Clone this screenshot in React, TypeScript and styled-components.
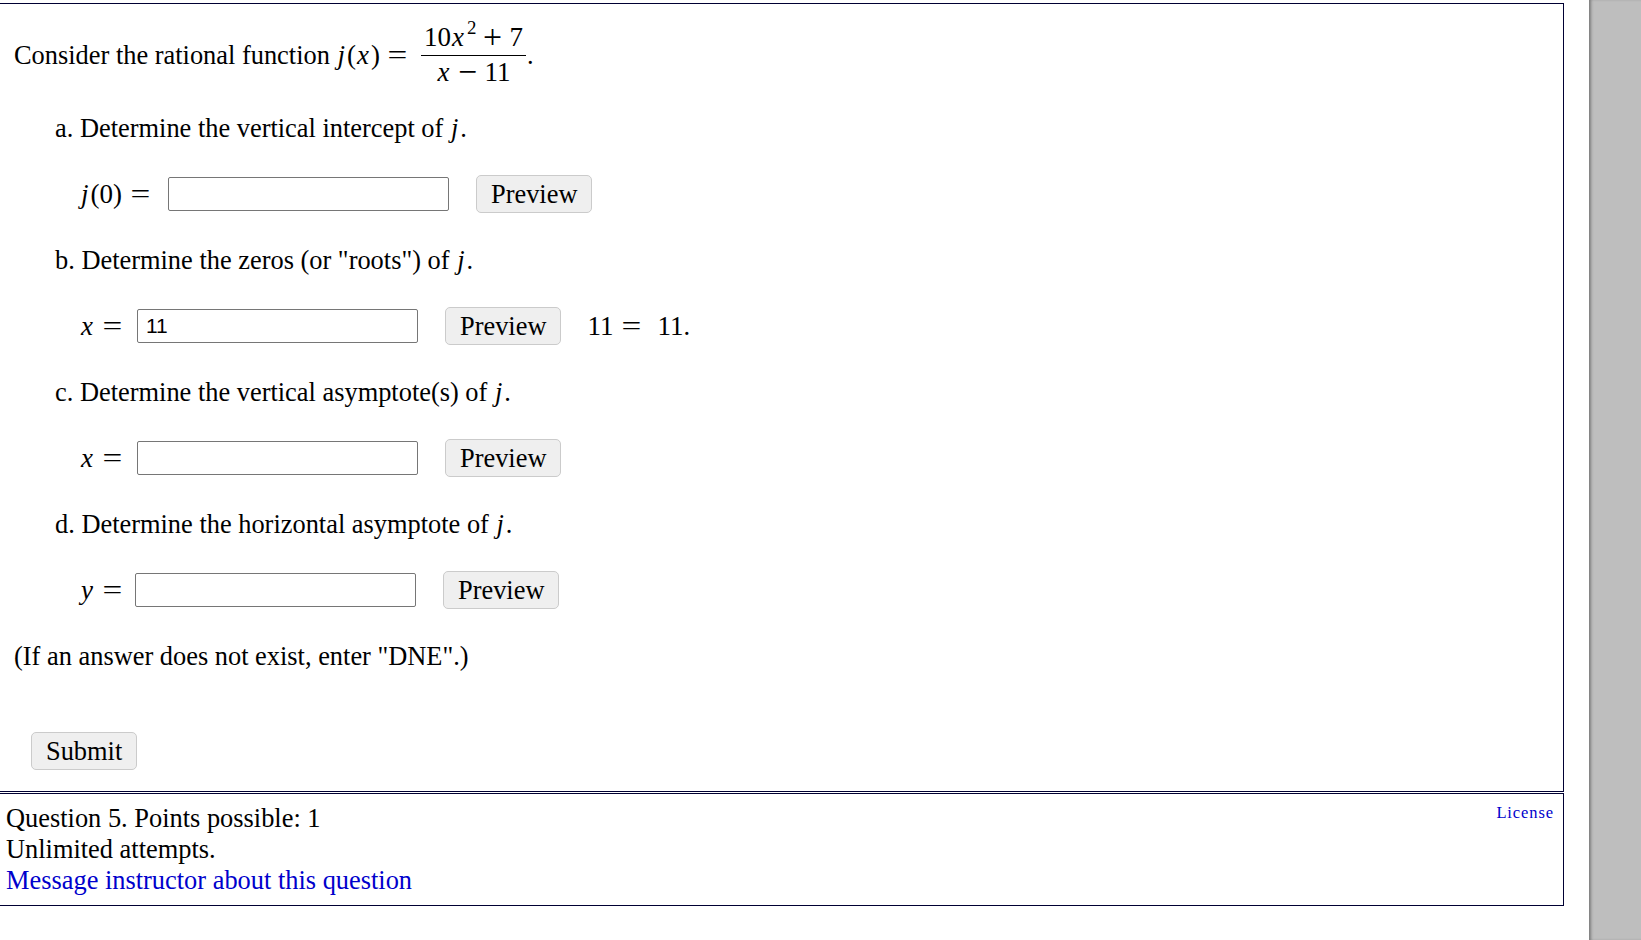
import React from 'react';
import styled, { createGlobalStyle } from 'styled-components';

const GlobalStyle = createGlobalStyle`
  html,
  body {
    margin: 0;
    padding: 0;
    background: #ffffff;
  }

  body {
    font-family: 'Liberation Serif', 'Times New Roman', serif;
    font-size: 26.4px;
    color: #000000;
  }

  * {
    box-sizing: border-box;
  }
`;

const Page = styled.div`
  display: flex;
  min-height: 100vh;
`;

const Main = styled.main`
  flex: none;
  width: 1564px;
  padding-top: 3px;
`;

const Gutter = styled.div`
  flex: none;
  width: 25px;
`;

const ScrollTrack = styled.div`
  flex: 1;
  background: #bebebe;
  box-shadow: inset 3px 0 3px -1px #7c7c7c;
`;

const QuestionPanel = styled.section`
  border: 1px solid #000033;
  border-left: none;
  padding: 0 0 21px 14px;
`;

const Intro = styled.div`
  display: flex;
  align-items: center;
  margin-top: 19px;
  line-height: 30px;
`;

const MathExpr = styled.span`
  display: inline-flex;
  align-items: baseline;
  font-family: 'Liberation Serif', 'Times New Roman', serif;
  font-size: 27px;
  white-space: nowrap;
`;

const Var = styled.span`
  font-style: italic;
  padding: 0 2px 0 1px;
`;

// relations (=) get a wider gap than binary operators (+, −)
const Op = styled.span<{ $rel?: boolean }>`
  display: inline-block;
  width: 0.78em;
  margin: 0 ${(p) => (p.$rel ? 0.278 : 0.222)}em;
  text-align: center;
  transform: ${(p) => (p.$rel ? 'scaleX(1.3)' : 'scale(1.25)')};
`;

const Space = styled.span`
  display: inline-block;
  width: 8px;
`;

const Sup = styled.span`
  font-size: 0.7em;
  line-height: 0;
  position: relative;
  top: -0.62em;
  margin-left: 1px;
`;

const Fraction = styled.span`
  display: inline-flex;
  flex-direction: column;
  align-items: stretch;
  margin: 0 1px 0 5px;
  font-size: 27px;
  text-align: center;
`;

const Numerator = styled.span`
  display: block;
  line-height: 28px;
  padding: 0 3px 4px;
  border-bottom: 1px solid #000000;
`;

const Denominator = styled.span`
  display: block;
  line-height: 28px;
  padding: 2px 3px 1px;
`;

const Part = styled.div<{ $first?: boolean }>`
  margin-top: ${(p) => (p.$first ? 26 : 32)}px;
  padding-left: 41px;
`;

const PartLabel = styled.div`
  line-height: 30px;
`;

const AnswerRow = styled.div`
  display: flex;
  align-items: center;
  height: 38px;
  margin-top: 32px;
  padding-left: 25px;
`;

const AnswerLabel = styled.span<{ $width: number }>`
  display: inline-flex;
  align-items: baseline;
  width: ${(p) => p.$width}px;
  flex: none;
`;

const AnswerInput = styled.input`
  width: 281px;
  height: 34px;
  padding: 0 8px;
  border: 1px solid #767676;
  border-radius: 2px;
  font-family: 'Liberation Sans', Arial, sans-serif;
  font-size: 21px;
  color: #000000;
  background: #ffffff;
  outline: none;
`;

const Button = styled.button<{ $gap?: number }>`
  height: 38px;
  margin-left: ${(p) => p.$gap ?? 0}px;
  padding: 0 14px;
  border: 1px solid #cbcbcb;
  border-radius: 5px;
  background: #efefef;
  font-family: 'Liberation Serif', 'Times New Roman', serif;
  font-size: 26.4px;
  color: #000000;
  cursor: pointer;
`;

const PreviewResult = styled.span`
  margin-left: 26px;
  display: inline-flex;
  align-items: baseline;
`;

const Note = styled.p`
  margin: 32px 0 0;
  line-height: 30px;
`;

const SubmitArea = styled.div`
  margin-top: 61px;
  padding-left: 17px;
`;

const Footer = styled.footer`
  display: flex;
  justify-content: space-between;
  align-items: flex-start;
  margin-top: 1px;
  border: 1px solid #000033;
  border-left: none;
  padding: 9px 9px 9px 6px;
  line-height: 31px;
`;

const FooterInfo = styled.div`
  display: flex;
  flex-direction: column;
`;

const Link = styled.a<{ $small?: boolean }>`
  color: #0000cc;
  text-decoration: none;
  font-size: ${(p) => (p.$small ? '16.5px' : 'inherit')};
  letter-spacing: ${(p) => (p.$small ? '0.9px' : 'normal')};
  line-height: ${(p) => (p.$small ? '19px' : 'inherit')};
  cursor: pointer;
`;

const J = () => <Var>j</Var>;

type Row = {
  part: string;
  prompt: React.ReactNode;
  label: React.ReactNode;
  labelWidth: number;
  value?: string;
  result?: React.ReactNode;
};

const rows: Row[] = [
  {
    part: 'a',
    prompt: <>Determine the vertical intercept of <J />.</>,
    label: (
      <>
        <Var>j</Var>(0)<Op $rel>=</Op>
      </>
    ),
    labelWidth: 88,
  },
  {
    part: 'b',
    prompt: <>Determine the zeros (or "roots") of <J />.</>,
    label: (
      <>
        <Var>x</Var>
        <Op $rel>=</Op>
      </>
    ),
    labelWidth: 57,
    value: '11',
    result: (
      <>
        <MathExpr>
          11<Op $rel>=</Op>
          <Space />
          11
        </MathExpr>
        .
      </>
    ),
  },
  {
    part: 'c',
    prompt: <>Determine the vertical asymptote(s) of <J />.</>,
    label: (
      <>
        <Var>x</Var>
        <Op $rel>=</Op>
      </>
    ),
    labelWidth: 57,
  },
  {
    part: 'd',
    prompt: <>Determine the horizontal asymptote of <J />.</>,
    label: (
      <>
        <Var>y</Var>
        <Op $rel>=</Op>
      </>
    ),
    labelWidth: 55,
  },
];

export default function App() {
  return (
    <>
      <GlobalStyle />
      <Page>
        <Main>
          <QuestionPanel>
            <Intro>
              <span>Consider the rational function&nbsp;</span>
              <MathExpr>
                <Var>j</Var>(<Var>x</Var>)<Op $rel>=</Op>
              </MathExpr>
              <Fraction>
                <Numerator>
                  10<Var>x</Var>
                  <Sup>2</Sup>
                  <Op>+</Op>7
                </Numerator>
                <Denominator>
                  <Var>x</Var>
                  <Op>&minus;</Op>11
                </Denominator>
              </Fraction>
              <span>.</span>
            </Intro>

            {rows.map((row, i) => (
              <Part key={row.part} $first={i === 0}>
                <PartLabel>
                  {row.part}. {row.prompt}
                </PartLabel>
                <AnswerRow>
                  <AnswerLabel $width={row.labelWidth}>
                    <MathExpr>{row.label}</MathExpr>
                  </AnswerLabel>
                  <AnswerInput type="text" defaultValue={row.value} />
                  <Button type="button" $gap={27}>
                    Preview
                  </Button>
                  {row.result && <PreviewResult>{row.result}</PreviewResult>}
                </AnswerRow>
              </Part>
            ))}

            <Note>(If an answer does not exist, enter "DNE".)</Note>

            <SubmitArea>
              <Button type="button">Submit</Button>
            </SubmitArea>
          </QuestionPanel>

          <Footer>
            <FooterInfo>
              <span>Question 5. Points possible: 1</span>
              <span>Unlimited attempts.</span>
              <Link>Message instructor about this question</Link>
            </FooterInfo>
            <Link $small>License</Link>
          </Footer>
        </Main>
        <Gutter />
        <ScrollTrack />
      </Page>
    </>
  );
}
